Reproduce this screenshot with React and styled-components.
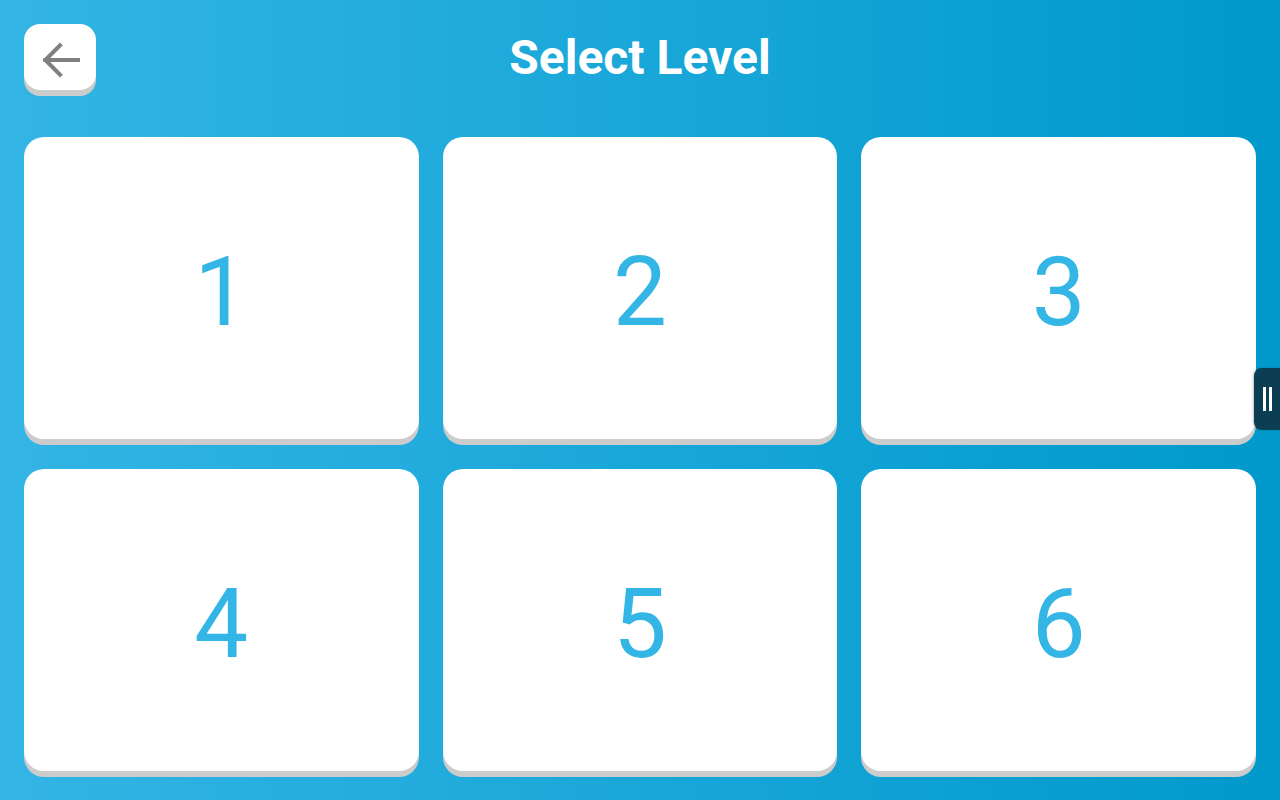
import React from 'react'
import styled, { createGlobalStyle } from 'styled-components'

const GlobalStyle = createGlobalStyle`
  html, body {
    margin: 0;
    padding: 0;
    height: 100%;
  }
  body {
    font-family: Roboto, "Liberation Sans", sans-serif;
    overflow: hidden;
  }
`

const Screen = styled.div`
  position: relative;
  width: 1280px;
  height: 800px;
  box-sizing: border-box;
  padding: 24px;
  background: linear-gradient(90deg, #33b5e5 0%, #0099cc 100%);
  display: flex;
  flex-direction: column;
  gap: 41px;
`

const Header = styled.div`
  position: relative;
  height: 72px;
  display: flex;
  align-items: center;
  justify-content: center;
`

const BackButton = styled.button`
  position: absolute;
  left: 0;
  top: 0;
  width: 72px;
  height: 66px;
  border: none;
  padding: 6px 0 0;
  border-radius: 16px;
  background: #fff;
  box-shadow: 0 6px 0 #cccccc;
  display: flex;
  align-items: center;
  justify-content: center;
  cursor: pointer;
`

const Title = styled.h1`
  margin: 0;
  margin-top: -4px;
  color: #fff;
  font-size: 48px;
  font-weight: 700;
  line-height: 1;
`

const Grid = styled.div`
  flex: 1;
  display: grid;
  grid-template-columns: repeat(3, 1fr);
  grid-template-rows: repeat(2, 302px);
  column-gap: 24px;
  row-gap: 30px;
`

const LevelCard = styled.button`
  border: none;
  border-radius: 20px;
  background: #fff;
  box-shadow: 0 6px 0 #cccccc;
  color: #33b5e5;
  font-family: Roboto, "Liberation Sans", sans-serif;
  font-size: 96px;
  font-weight: 400;
  display: flex;
  align-items: center;
  justify-content: center;
  cursor: pointer;
  padding: 8px 0 0;
`

const SideTab = styled.div`
  position: absolute;
  right: 0;
  top: 368px;
  width: 26px;
  height: 62px;
  background: #0b3e52;
  border-radius: 8px 0 0 8px;
  box-shadow: -1px 0 2px rgba(0, 0, 0, 0.25);
  display: flex;
  align-items: center;
  justify-content: center;
  gap: 3px;
`

const TabBar = styled.span`
  width: 3px;
  height: 24px;
  background: #fff;
`

const levels = [1, 2, 3, 4, 5, 6]

export default function App() {
  return (
    <>
      <GlobalStyle />
      <Screen>
        <Header>
          <BackButton aria-label="Back">
            <svg width="54" height="54" viewBox="0 0 24 24" fill="none" stroke="#808080" strokeWidth="1.8" strokeLinecap="square">
              <path d="M20 12H5.5" />
              <path d="M12 5.5L5.5 12l6.5 6.5" />
            </svg>
          </BackButton>
          <Title>Select Level</Title>
        </Header>
        <Grid>
          {levels.map((n) => (
            <LevelCard key={n}>{n}</LevelCard>
          ))}
        </Grid>
        <SideTab>
          <TabBar />
          <TabBar />
        </SideTab>
      </Screen>
    </>
  )
}
